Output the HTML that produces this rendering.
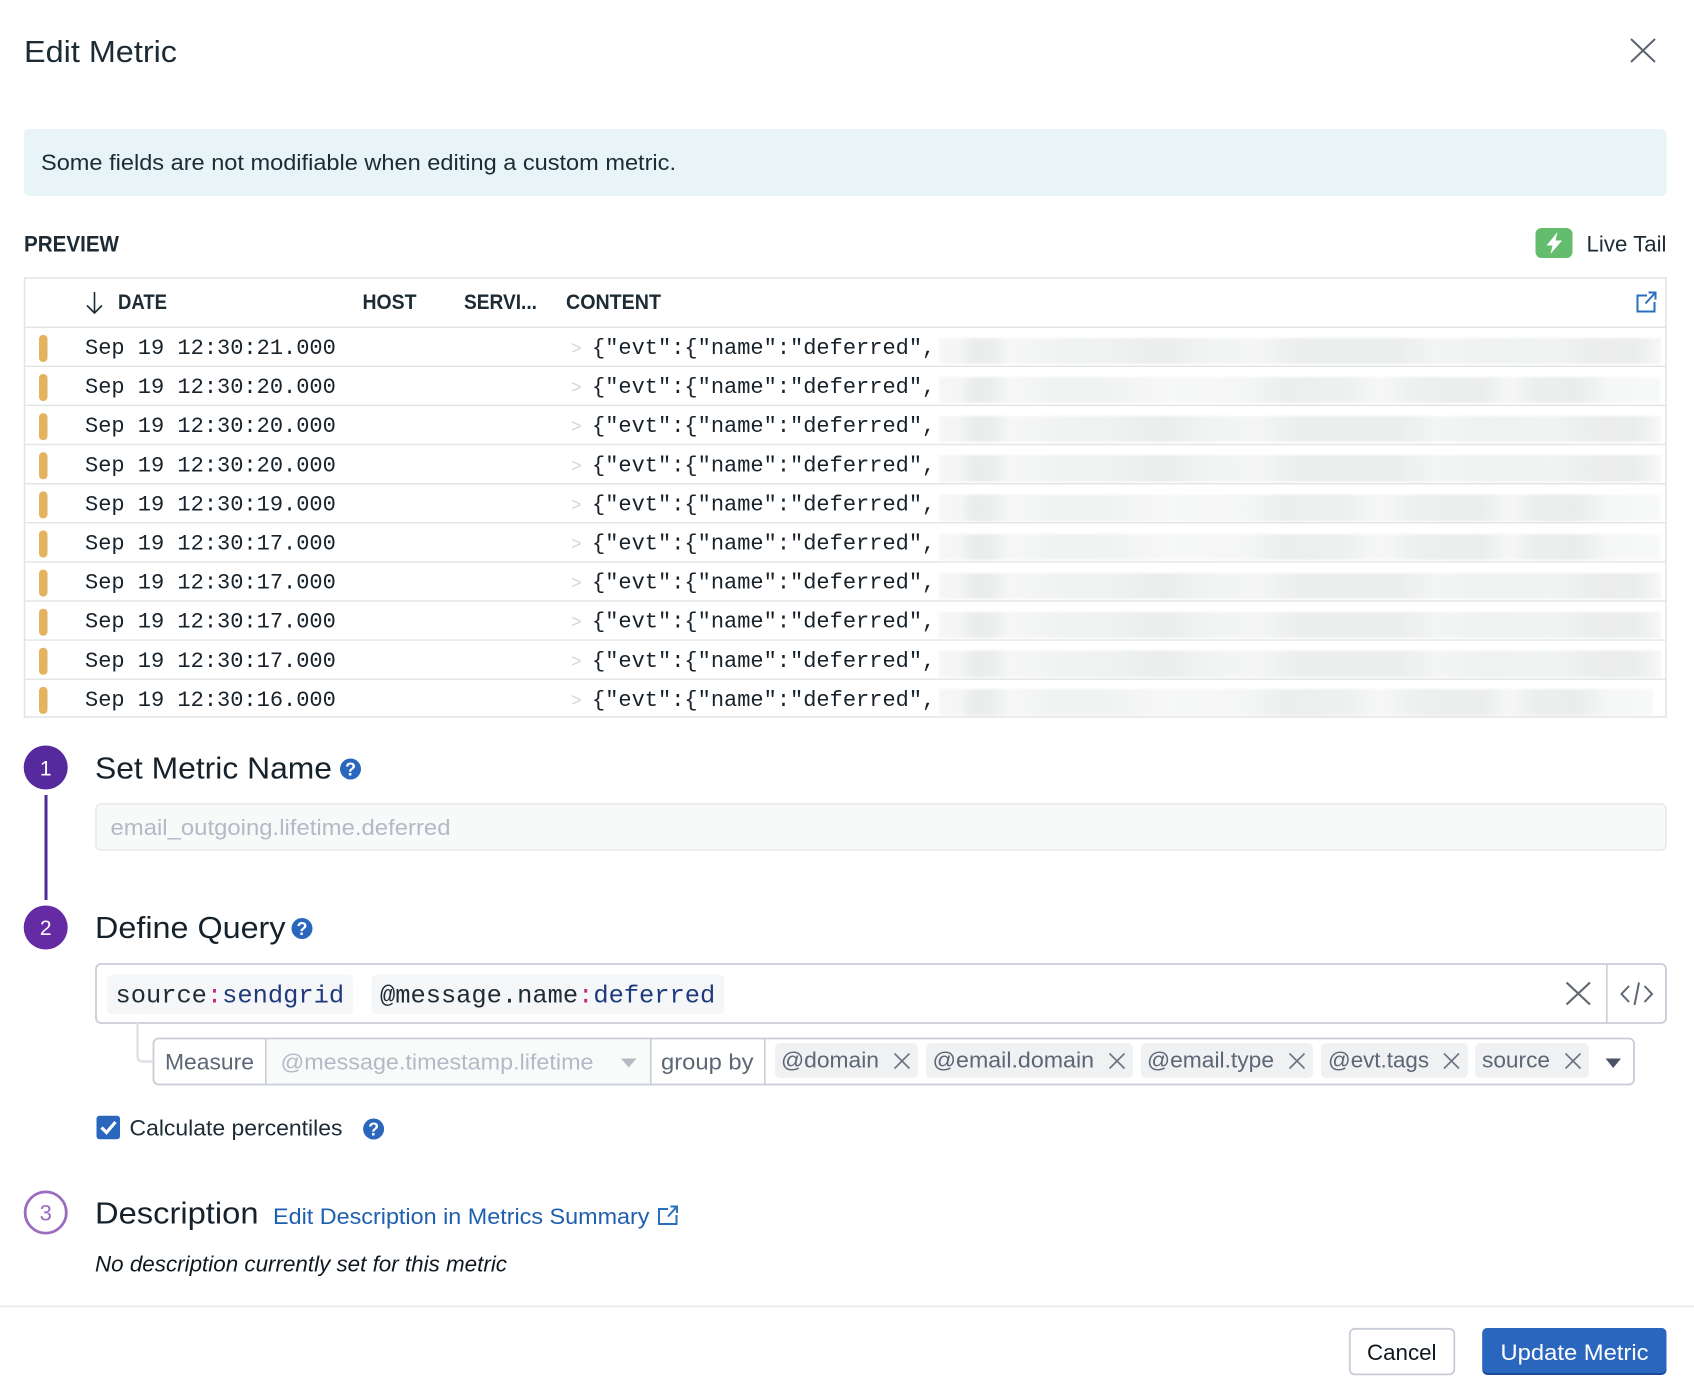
<!DOCTYPE html>
<html><head><meta charset="utf-8"><title>Edit Metric</title>
<style>
html,body{margin:0;padding:0;background:#fff;width:1694px;height:1395px;overflow:hidden}
svg{display:block}
text{font-family:"Liberation Sans",sans-serif;fill:#1c2b34;font-size:22px}
.m{font-family:"Liberation Mono",monospace;font-size:22px;fill:#18222b}
.gt{font-family:"Liberation Mono",monospace;font-size:18px;fill:#d3d6db}
.h{font-weight:bold;font-size:21px}
.t{font-size:30.5px;fill:#16222b}
.tag{fill:#5c6675;font-size:22.5px}
.ph{fill:#b3b9c5;font-size:22.5px}
.q{font-family:"Liberation Mono",monospace;font-size:25.4px}
.x{stroke:#6b7480;stroke-width:1.6;fill:none}
.hq{fill:#fff;font-size:18px;font-weight:bold}
</style></head><body>
<svg width="1694" height="1395" viewBox="0 0 1694 1395" xmlns="http://www.w3.org/2000/svg">
<defs>
<linearGradient id="A" gradientUnits="userSpaceOnUse" x1="938" x2="1662" y1="0" y2="0">
<stop offset="0" stop-color="#f5f6f6"/><stop offset=".03" stop-color="#f3f4f4"/><stop offset=".05" stop-color="#e9ebeb"/><stop offset=".07" stop-color="#e9ebeb"/><stop offset=".1" stop-color="#f5f6f6"/><stop offset=".16" stop-color="#f1f2f2"/><stop offset=".24" stop-color="#eff1f1"/><stop offset=".31" stop-color="#e9ebeb"/><stop offset=".36" stop-color="#f0f2f2"/><stop offset=".44" stop-color="#f4f5f5"/><stop offset=".5" stop-color="#ebeded"/><stop offset=".64" stop-color="#ebeded"/><stop offset=".69" stop-color="#f3f4f4"/><stop offset=".76" stop-color="#eff1f1"/><stop offset=".85" stop-color="#f1f3f3"/><stop offset=".92" stop-color="#e9ebeb"/><stop offset=".96" stop-color="#eaecec"/><stop offset="1" stop-color="#f5f6f6"/>
</linearGradient>
<linearGradient id="B" gradientUnits="userSpaceOnUse" x1="938" x2="1662" y1="0" y2="0">
<stop offset="0" stop-color="#f6f7f7"/><stop offset=".03" stop-color="#f4f5f5"/><stop offset=".05" stop-color="#e9ebeb"/><stop offset=".07" stop-color="#e9ebeb"/><stop offset=".1" stop-color="#f6f7f7"/><stop offset=".16" stop-color="#f0f2f2"/><stop offset=".25" stop-color="#f1f2f2"/><stop offset=".32" stop-color="#f7f8f8"/><stop offset=".42" stop-color="#f5f6f6"/><stop offset=".48" stop-color="#ebeded"/><stop offset=".56" stop-color="#edefef"/><stop offset=".61" stop-color="#f6f7f7"/><stop offset=".67" stop-color="#eceeee"/><stop offset=".75" stop-color="#eaecec"/><stop offset=".79" stop-color="#f5f6f6"/><stop offset=".83" stop-color="#eaecec"/><stop offset=".88" stop-color="#e9ebeb"/><stop offset=".93" stop-color="#f6f7f7"/><stop offset="1" stop-color="#f8f9f9"/>
</linearGradient>
<filter id="bl" x="-2%" y="-20%" width="104%" height="140%"><feGaussianBlur stdDeviation="1"/></filter>
</defs>

<text x="24" y="62" style="font-size:31px" textLength="153" lengthAdjust="spacingAndGlyphs">Edit Metric</text>
<path d="M1631 39L1655 62M1655 39L1631 62" stroke="#59636e" stroke-width="2" fill="none"/>

<rect x="24" y="129" width="1642.5" height="67" rx="5" fill="#e9f4f9"/>
<text x="41" y="170" textLength="635" lengthAdjust="spacingAndGlyphs">Some fields are not modifiable when editing a custom metric.</text>

<text x="24" y="251.5" style="font-weight:bold" textLength="95" lengthAdjust="spacingAndGlyphs">PREVIEW</text>
<rect x="1535.5" y="228" width="37" height="30" rx="6" fill="#63bd6c"/>
<path d="M1557.5 232L1546.5 245.5H1552.5L1550.5 254L1562 240.5H1555.5Z" fill="#fff"/>
<text x="1586.5" y="251.5" textLength="80" lengthAdjust="spacingAndGlyphs">Live Tail</text>

<!-- table -->
<rect x="24.5" y="278" width="1641.5" height="439" fill="#fff" stroke="#e2e4e7" stroke-width="1.6"/>
<path d="M94.5 292V313M87 305.5L94.5 313L102 305.5" stroke="#1c2b34" stroke-width="1.6" fill="none"/>
<text x="118" y="309" class="h" textLength="49" lengthAdjust="spacingAndGlyphs">DATE</text>
<text x="362.5" y="309" class="h" textLength="54" lengthAdjust="spacingAndGlyphs">HOST</text>
<text x="464" y="309" class="h" textLength="73" lengthAdjust="spacingAndGlyphs">SERVI...</text>
<text x="566" y="309" class="h" textLength="95" lengthAdjust="spacingAndGlyphs">CONTENT</text>
<path d="M1647 295.5H1637.5V311.5H1654.5V302M1645.5 303.5L1655 293M1648.5 292.5H1655.5V299.5" stroke="#2a6fbd" stroke-width="2" fill="none"/>
<g fill="url(#A)" opacity=".9" filter="url(#bl)" style="fill-opacity:1">
<rect x="939" y="338" width="722" height="26" fill="url(#A)"/>
<rect x="939" y="377" width="722" height="26" fill="url(#B)"/>
<rect x="939" y="416" width="722" height="26" fill="url(#A)"/>
<rect x="939" y="455" width="722" height="27" fill="url(#A)"/>
<rect x="939" y="494.5" width="722" height="27" fill="url(#B)"/>
<rect x="939" y="534" width="722" height="26" fill="url(#B)"/>
<rect x="939" y="573" width="722" height="26" fill="url(#A)"/>
<rect x="939" y="612" width="722" height="26" fill="url(#A)"/>
<rect x="939" y="650.5" width="722" height="27" fill="url(#A)"/>
<rect x="939" y="689" width="714" height="27" fill="url(#B)"/>
</g>
<g fill="#e2e4e7">
<rect x="24" y="326.5" width="1642" height="1.6"/><rect x="24" y="365.6" width="1642" height="1.4"/><rect x="24" y="404.7" width="1642" height="1.4"/><rect x="24" y="443.8" width="1642" height="1.4"/><rect x="24" y="483" width="1642" height="1.4"/><rect x="24" y="522.1" width="1642" height="1.4"/><rect x="24" y="561.2" width="1642" height="1.4"/><rect x="24" y="600.3" width="1642" height="1.4"/><rect x="24" y="639.4" width="1642" height="1.4"/><rect x="24" y="678.5" width="1642" height="1.4"/>
</g>
<g fill="#e3b35f">
<rect x="39" y="335" width="8.5" height="27" rx="4"/><rect x="39" y="374" width="8.5" height="27" rx="4"/><rect x="39" y="413.2" width="8.5" height="27" rx="4"/><rect x="39" y="452.3" width="8.5" height="27" rx="4"/><rect x="39" y="491.4" width="8.5" height="27" rx="4"/><rect x="39" y="530.5" width="8.5" height="27" rx="4"/><rect x="39" y="569.6" width="8.5" height="27" rx="4"/><rect x="39" y="608.7" width="8.5" height="27" rx="4"/><rect x="39" y="647.8" width="8.5" height="27" rx="4"/><rect x="39" y="686.9" width="8.5" height="27" rx="4"/>
</g>
<g transform="translate(0,-1)">
<text class="m" x="85" y="355">Sep 19 12:30:21.000</text><text class="gt" x="571" y="355">&gt;</text><text class="m" x="592" y="355">{"evt":{"name":"deferred",</text>
<text class="m" x="85" y="394">Sep 19 12:30:20.000</text><text class="gt" x="571" y="394">&gt;</text><text class="m" x="592" y="394">{"evt":{"name":"deferred",</text>
<text class="m" x="85" y="433">Sep 19 12:30:20.000</text><text class="gt" x="571" y="433">&gt;</text><text class="m" x="592" y="433">{"evt":{"name":"deferred",</text>
<text class="m" x="85" y="472.3">Sep 19 12:30:20.000</text><text class="gt" x="571" y="472.3">&gt;</text><text class="m" x="592" y="472.3">{"evt":{"name":"deferred",</text>
<text class="m" x="85" y="511.4">Sep 19 12:30:19.000</text><text class="gt" x="571" y="511.4">&gt;</text><text class="m" x="592" y="511.4">{"evt":{"name":"deferred",</text>
<text class="m" x="85" y="550.5">Sep 19 12:30:17.000</text><text class="gt" x="571" y="550.5">&gt;</text><text class="m" x="592" y="550.5">{"evt":{"name":"deferred",</text>
<text class="m" x="85" y="589.6">Sep 19 12:30:17.000</text><text class="gt" x="571" y="589.6">&gt;</text><text class="m" x="592" y="589.6">{"evt":{"name":"deferred",</text>
<text class="m" x="85" y="628.7">Sep 19 12:30:17.000</text><text class="gt" x="571" y="628.7">&gt;</text><text class="m" x="592" y="628.7">{"evt":{"name":"deferred",</text>
<text class="m" x="85" y="667.8">Sep 19 12:30:17.000</text><text class="gt" x="571" y="667.8">&gt;</text><text class="m" x="592" y="667.8">{"evt":{"name":"deferred",</text>
<text class="m" x="85" y="706.9">Sep 19 12:30:16.000</text><text class="gt" x="571" y="706.9">&gt;</text><text class="m" x="592" y="706.9">{"evt":{"name":"deferred",</text>
</g>

<!-- step 1 -->
<circle cx="45.7" cy="767.5" r="22" fill="#562a9c"/>
<text x="45.7" y="775.5" text-anchor="middle" style="fill:#fff;font-size:21px">1</text>
<rect x="44.5" y="795" width="3" height="105" fill="#4f2a9a"/>
<text x="95" y="778.5" class="t" textLength="237" lengthAdjust="spacingAndGlyphs">Set Metric Name</text>
<circle cx="350.5" cy="769" r="10.5" fill="#2a66bd"/>
<text x="350.5" y="775.5" text-anchor="middle" class="hq">?</text>
<rect x="96" y="804" width="1570" height="46" rx="5" fill="#f8f9f9" stroke="#e6e8ea" stroke-width="1.6"/>
<text x="110.5" y="835" class="ph" textLength="340" lengthAdjust="spacingAndGlyphs">email_outgoing.lifetime.deferred</text>

<!-- step 2 -->
<circle cx="45.7" cy="927.5" r="22" fill="#652ba4"/>
<text x="45.7" y="935" text-anchor="middle" style="fill:#fff;font-size:21px">2</text>
<text x="95" y="938" class="t" textLength="190.5" lengthAdjust="spacingAndGlyphs">Define Query</text>
<circle cx="302" cy="928.5" r="10.5" fill="#2a66bd"/>
<text x="302" y="935" text-anchor="middle" class="hq">?</text>
<rect x="96" y="964" width="1570" height="59" rx="5" fill="#fff" stroke="#c9cdd8" stroke-width="1.8"/>
<rect x="107" y="974.7" width="246" height="39.5" rx="5" fill="#f5f6f7"/>
<rect x="371.7" y="974.7" width="352.5" height="39.5" rx="5" fill="#f5f6f7"/>
<text class="q" x="115.5" y="1002.3"><tspan fill="#1c2b34">source</tspan><tspan fill="#c4277f">:</tspan><tspan fill="#1f3a7c">sendgrid</tspan></text>
<text class="q" x="380" y="1002.3"><tspan fill="#1c2b34">@message.name</tspan><tspan fill="#c4277f">:</tspan><tspan fill="#1f3a7c">deferred</tspan></text>
<path d="M1566.5 982.5L1590 1004.5M1590 982.5L1566.5 1004.5" stroke="#5f6873" stroke-width="2.2" fill="none"/>
<rect x="1606" y="964" width="1.6" height="59" fill="#c9cdd8"/>
<path d="M1629 986L1621.5 994L1629 1002M1644.5 986L1652 994L1644.5 1002M1639 982.5L1634.5 1005" stroke="#5f6873" stroke-width="2" fill="none"/>

<path d="M137.5 1023V1056Q137.5 1061.5 143 1061.5H153" stroke="#dfe1e6" stroke-width="2.4" fill="none"/>
<rect x="153.5" y="1038.5" width="1480.5" height="46" rx="5" fill="#fff" stroke="#c9cdd8" stroke-width="1.8"/>
<rect x="266" y="1039.4" width="384" height="44.2" fill="#f9fafa"/>
<rect x="265" y="1038.5" width="1.6" height="46" fill="#c9cdd8"/>
<rect x="650" y="1038.5" width="1.6" height="46" fill="#c9cdd8"/>
<rect x="764" y="1038.5" width="1.6" height="46" fill="#c9cdd8"/>
<text x="165" y="1069.5" style="fill:#5c6675;font-size:22.5px" textLength="89" lengthAdjust="spacingAndGlyphs">Measure</text>
<text x="280.5" y="1069.5" class="ph" textLength="313" lengthAdjust="spacingAndGlyphs">@message.timestamp.lifetime</text>
<path d="M621 1058.5H636.5L628.7 1067.5Z" fill="#b5bac4"/>
<text x="661" y="1069.5" style="fill:#5c6675;font-size:22.5px" textLength="92.5" lengthAdjust="spacingAndGlyphs">group by</text>

<g fill="#f0f1f3">
<rect x="775" y="1043" width="143" height="35" rx="5"/><rect x="926" y="1043" width="207" height="35" rx="5"/><rect x="1141" y="1043" width="172" height="35" rx="5"/><rect x="1321" y="1043" width="147" height="35" rx="5"/><rect x="1475" y="1043" width="114" height="35" rx="5"/>
</g>
<text x="781" y="1067.5" class="tag" textLength="98" lengthAdjust="spacingAndGlyphs">@domain</text>
<path class="x" d="M894.5 1053.5L909.5 1068.5M909.5 1053.5L894.5 1068.5"/>
<text x="932.5" y="1067.5" class="tag" textLength="161.5" lengthAdjust="spacingAndGlyphs">@email.domain</text>
<path class="x" d="M1109.5 1053.5L1124.5 1068.5M1124.5 1053.5L1109.5 1068.5"/>
<text x="1147" y="1067.5" class="tag" textLength="127" lengthAdjust="spacingAndGlyphs">@email.type</text>
<path class="x" d="M1289.5 1053.5L1304.5 1068.5M1304.5 1053.5L1289.5 1068.5"/>
<text x="1328" y="1067.5" class="tag" textLength="101" lengthAdjust="spacingAndGlyphs">@evt.tags</text>
<path class="x" d="M1444 1053.5L1459 1068.5M1459 1053.5L1444 1068.5"/>
<text x="1482" y="1067.5" class="tag" textLength="68" lengthAdjust="spacingAndGlyphs">source</text>
<path class="x" d="M1565.5 1053.5L1580.5 1068.5M1580.5 1053.5L1565.5 1068.5"/>
<path d="M1605.5 1058.5H1621L1613.2 1068Z" fill="#4a5361"/>

<rect x="96.5" y="1115.7" width="23.5" height="23.5" rx="3" fill="#2a66bd"/>
<path d="M101.5 1127.5L106.5 1132.5L115.5 1122" stroke="#fff" stroke-width="3.2" fill="none"/>
<text x="129.5" y="1135.7" textLength="213" lengthAdjust="spacingAndGlyphs">Calculate percentiles</text>
<circle cx="373.6" cy="1129" r="10.5" fill="#2a66bd"/>
<text x="373.6" y="1135.5" text-anchor="middle" class="hq">?</text>

<!-- step 3 -->
<circle cx="45.7" cy="1212.5" r="20.6" fill="#fff" stroke="#9a6cc0" stroke-width="2.8"/>
<text x="45.7" y="1220.5" text-anchor="middle" style="fill:#9a6cc0;font-size:22px">3</text>
<text x="95" y="1223.5" class="t" textLength="163.5" lengthAdjust="spacingAndGlyphs">Description</text>
<text x="273" y="1224" style="fill:#1f5fb0" textLength="376.5" lengthAdjust="spacingAndGlyphs">Edit Description in Metrics Summary</text>
<path d="M668 1209H659V1224H676.5V1215M668 1216.5L676.5 1207M670.5 1206.5H677V1213" stroke="#2a6fbd" stroke-width="2" fill="none"/>
<text x="95" y="1271.5" style="font-style:italic;fill:#10181f" textLength="412" lengthAdjust="spacingAndGlyphs">No description currently set for this metric</text>

<rect x="0" y="1305.5" width="1694" height="1.6" fill="#e6e8ea"/>
<rect x="1349.8" y="1328.8" width="104.5" height="45.6" rx="5" fill="#fff" stroke="#c9cdd8" stroke-width="1.8"/>
<text x="1367" y="1360" style="fill:#10181f" textLength="69.5" lengthAdjust="spacingAndGlyphs">Cancel</text>
<rect x="1482.3" y="1328" width="184.2" height="47" rx="5" fill="#1b4a9c"/>
<rect x="1482.3" y="1328" width="184.2" height="45" rx="5" fill="#2a66bd"/>
<text x="1500.5" y="1360" style="fill:#fff" textLength="148" lengthAdjust="spacingAndGlyphs">Update Metric</text>
</svg>
</body></html>
